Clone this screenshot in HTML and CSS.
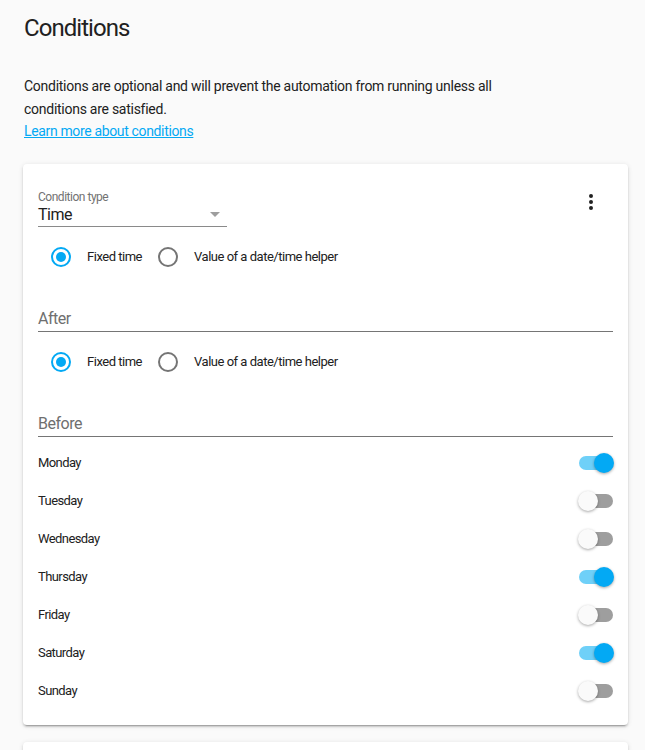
FILE: index.html
```html
<!DOCTYPE html>
<html lang="en">
  <head>
    <meta charset="UTF-8" />
    <meta name="viewport" content="width=device-width, initial-scale=1.0" />
    <title>Conditions</title>
    <link rel="stylesheet" href="styles.css">
  </head>
  <body>
    <section class="page">
      <h1>Conditions</h1>
      <p class="intro">
        Conditions are optional and will prevent the automation from running unless all conditions are satisfied.
        <br />
        <a href="#">Learn more about conditions</a>
      </p>

      <div class="card">
        <div class="card-head">
          <div class="select">
            <span class="select-label">Condition type</span>
            <div class="select-value">
              <span>Time</span>
              <span class="arrow"></span>
            </div>
          </div>
          <button class="menu" aria-label="menu">
            <svg viewBox="0 0 24 24" width="24" height="24">
              <path d="M12,16A2,2 0 0,1 14,18A2,2 0 0,1 12,20A2,2 0 0,1 10,18A2,2 0 0,1 12,16M12,10A2,2 0 0,1 14,12A2,2 0 0,1 12,14A2,2 0 0,1 10,12A2,2 0 0,1 12,10M12,4A2,2 0 0,1 14,6A2,2 0 0,1 12,8A2,2 0 0,1 10,6A2,2 0 0,1 12,4Z" />
            </svg>
          </button>
        </div>

        <div class="radios">
          <label class="radio"><span class="dot checked"></span>Fixed time</label>
          <label class="radio"><span class="dot"></span>Value of a date/time helper</label>
        </div>
        <div class="field">After</div>

        <div class="radios">
          <label class="radio"><span class="dot checked"></span>Fixed time</label>
          <label class="radio"><span class="dot"></span>Value of a date/time helper</label>
        </div>
        <div class="field">Before</div>

        <div class="days">
          <div class="day"><span>Monday</span><span class="toggle on"></span></div>
          <div class="day"><span>Tuesday</span><span class="toggle"></span></div>
          <div class="day"><span>Wednesday</span><span class="toggle"></span></div>
          <div class="day"><span>Thursday</span><span class="toggle on"></span></div>
          <div class="day"><span>Friday</span><span class="toggle"></span></div>
          <div class="day"><span>Saturday</span><span class="toggle on"></span></div>
          <div class="day"><span>Sunday</span><span class="toggle"></span></div>
        </div>
      </div>

      <div class="card next"></div>
    </section>
  </body>
</html>
```

FILE: styles.css
```css
body {
  margin: 0;
  padding: 0;
  background-color: #fafafa;
  font-family: Roboto, "Noto Sans", sans-serif;
  color: #212121;
  letter-spacing: -0.03em;
}
.page {
  padding: 12px 17px 0 23px;
}
h1 {
  margin: 0 0 0 1px;
  font-size: 24px;
  font-weight: 400;
  line-height: 32px;
  letter-spacing: -0.04em;
}
.intro {
  margin: 31px 0 0 1px;
  max-width: 500px;
  font-size: 14px;
  line-height: 22.5px;
  letter-spacing: -0.019em;
}
.intro a {
  color: #03a9f4;
  letter-spacing: -0.025em;
}
.card {
  margin-top: 21px;
  padding: 16px 15px 15px 15px;
  background-color: white;
  border-radius: 4px;
  box-shadow: 0 2px 2px 0 rgba(0, 0, 0, 0.14), 0 1px 5px 0 rgba(0, 0, 0, 0.12),
    0 3px 1px -2px rgba(0, 0, 0, 0.2);
}
.card.next {
  margin-top: 17px;
  height: 60px;
}
.card-head {
  display: flex;
  justify-content: space-between;
  align-items: flex-start;
}
.select {
  width: 189px;
  padding-top: 9px;
  border-bottom: 1px solid #8a8a8a;
}
.select-label {
  display: block;
  font-size: 12px;
  line-height: 16px;
  color: #727272;
}
.select-value {
  display: flex;
  justify-content: space-between;
  align-items: center;
  font-size: 16px;
  line-height: 20px;
  padding-bottom: 1px;
}
.arrow {
  width: 0;
  height: 0;
  margin-right: 7px;
  border-left: 5px solid transparent;
  border-right: 5px solid transparent;
  border-top: 5px solid #9e9e9e;
}
.menu {
  margin: 10px 10px 0 0;
  padding: 0;
  border: none;
  background: none;
  width: 24px;
  height: 24px;
}
.menu svg {
  display: block;
  fill: #212121;
}
.radios {
  display: flex;
  align-items: center;
  height: 48px;
  margin-top: 6px;
  padding-left: 13px;
}
.radio {
  display: flex;
  align-items: center;
  font-size: 13px;
  margin-right: 16px;
}
.dot {
  box-sizing: border-box;
  width: 20px;
  height: 20px;
  margin-right: 16px;
  border: 2px solid #757575;
  border-radius: 50%;
  display: flex;
  justify-content: center;
  align-items: center;
}
.dot.checked {
  border-color: #03a9f4;
}
.dot.checked::after {
  content: "";
  width: 10px;
  height: 10px;
  border-radius: 50%;
  background-color: #03a9f4;
}
.field {
  padding: 28px 0 2px;
  font-size: 16px;
  line-height: 20px;
  color: #6f6f6f;
  border-bottom: 1px solid #757575;
}
.days {
  margin-top: 7px;
}
.day {
  display: flex;
  justify-content: space-between;
  align-items: center;
  height: 38px;
  font-size: 13px;
  letter-spacing: -0.045em;
}
.toggle {
  position: relative;
  width: 34px;
  height: 14px;
  border-radius: 7px;
  background-color: #9e9e9e;
}
.toggle::after {
  content: "";
  position: absolute;
  top: -3px;
  left: -1px;
  width: 20px;
  height: 20px;
  border-radius: 50%;
  background-color: #fafafa;
  box-shadow: 0 1px 3px rgba(0, 0, 0, 0.35);
}
.toggle.on {
  background-color: #6fd0f8;
}
.toggle.on::after {
  left: 15px;
  background-color: #03a9f4;
}
```
